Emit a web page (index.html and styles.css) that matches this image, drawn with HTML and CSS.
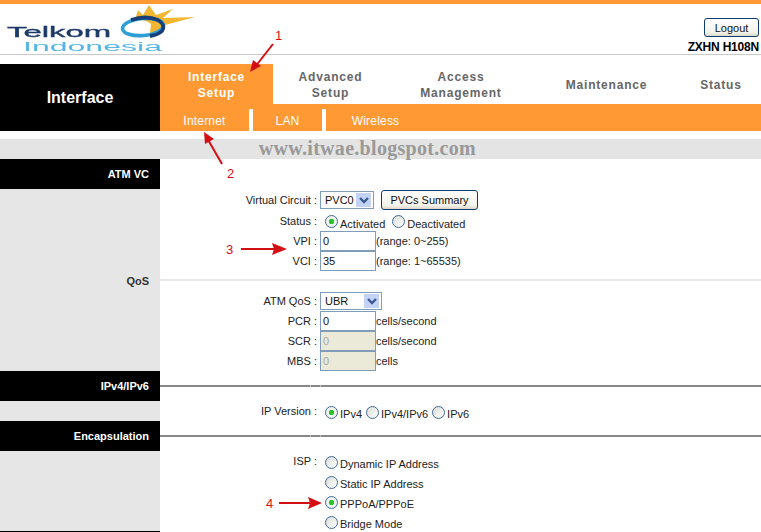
FILE: index.html
```html
<!DOCTYPE html>
<html>
<head>
<meta charset="utf-8">
<title>Interface Setup</title>
<link rel="stylesheet" href="styles.css">
</head>
<body>
<div class="page">
  <header class="top">
    <svg class="logo" width="200" height="50" viewBox="0 4 200 50">
      <path d="M135 20 L138 10 L143 15 L149 5 L156 15 L173 9 L163 18 L195 17 L165 25 L163 30 L150 33 L151 24 Q146 20 140 20 Z" fill="#f2b632"/>
      <ellipse cx="143" cy="27" rx="20.5" ry="8.5" fill="none" stroke="#2d9ed6" stroke-width="3.6" transform="rotate(-5 143 27)"/>
      <path d="M131 20 Q146 15 158 20 Q166 25 162 31 Q158 35 150 36" fill="none" stroke="#173f78" stroke-width="3.8"/>
      <text class="logo-a" x="7" y="37" textLength="104" lengthAdjust="spacingAndGlyphs">Telkom</text>
      <text class="logo-b" x="23" y="51" textLength="139" lengthAdjust="spacingAndGlyphs">Indonesia</text>
    </svg>
    <div class="top-right">
      <button class="btn logout">Logout</button>
      <div class="model">ZXHN H108N</div>
    </div>
  </header>

  <nav class="nav">
    <div class="nav-title">Interface</div>
    <div class="nav-main">
      <div class="tabs">
        <div class="tab tab-active t1">Interface<br>Setup</div>
        <div class="tab t2">Advanced<br>Setup</div>
        <div class="tab t3">Access<br>Management</div>
        <div class="tab t4">Maintenance</div>
        <div class="tab t5">Status</div>
      </div>
      <div class="subtabs">
        <div class="sub s1">Internet</div>
        <div class="sub s2">LAN</div>
        <div class="sub s3">Wireless</div>
      </div>
    </div>
  </nav>

  <div class="band">www.itwae.blogspot.com</div>

  <main class="content">
    <section class="sec">
      <h2 class="side side-black h30">ATM VC</h2>
      <div class="body"></div>
    </section>

    <section class="sec">
      <div class="side side-gray qos-side"><span class="side-label">QoS</span></div>
      <div class="body body-qos">
        <div class="row"><span class="lbl">Virtual Circuit :</span><span class="val"><span class="select s-pvc">PVC0<span class="arrow"><svg width="10" height="7" viewBox="0 0 10 7"><path d="M1 1 L5 5 L9 1" fill="none" stroke="#3a5a94" stroke-width="2.4"/></svg></span></span><button class="btn summary">PVCs Summary</button></span></div>
        <div class="row row-tall"><span class="lbl">Status :</span><span class="val val-radio"><span class="radio on"></span><span class="opt opt-wide">Activated</span><span class="radio"></span><span class="opt">Deactivated</span></span></div>
        <div class="row"><span class="lbl">VPI :</span><span class="val"><span class="input">0</span><span>(range: 0~255)</span></span></div>
        <div class="row"><span class="lbl">VCI :</span><span class="val"><span class="input">35</span><span>(range: 1~65535)</span></span></div>
        <div class="rule-light"></div>
        <div class="row"><span class="lbl">ATM QoS :</span><span class="val"><span class="select s-ubr">UBR<span class="arrow"><svg width="10" height="7" viewBox="0 0 10 7"><path d="M1 1 L5 5 L9 1" fill="none" stroke="#3a5a94" stroke-width="2.4"/></svg></span></span></span></div>
        <div class="row"><span class="lbl">PCR :</span><span class="val"><span class="input">0</span><span>cells/second</span></span></div>
        <div class="row"><span class="lbl">SCR :</span><span class="val"><span class="input off">0</span><span>cells/second</span></span></div>
        <div class="row"><span class="lbl">MBS :</span><span class="val"><span class="input off">0</span><span>cells</span></span></div>
      </div>
    </section>

    <section class="sec">
      <h2 class="side side-black h30">IPv4/IPv6</h2>
      <div class="body rule-body"><div class="rule-dark"></div></div>
    </section>

    <section class="sec">
      <div class="side side-gray"></div>
      <div class="body">
        <div class="row"><span class="lbl">IP Version :</span><span class="val val-radio"><span class="radio on"></span><span class="opt">IPv4</span><span class="radio"></span><span class="opt">IPv4/IPv6</span><span class="radio"></span><span class="opt">IPv6</span></span></div>
      </div>
    </section>

    <section class="sec">
      <h2 class="side side-black h30">Encapsulation</h2>
      <div class="body rule-body"><div class="rule-dark"></div></div>
    </section>

    <section class="sec">
      <div class="side side-gray last"></div>
      <div class="body">
        <div class="row"><span class="lbl">ISP :</span><span class="val val-radio"><span class="radio"></span><span class="opt">Dynamic IP Address</span></span></div>
        <div class="row"><span class="lbl"></span><span class="val val-radio"><span class="radio"></span><span class="opt">Static IP Address</span></span></div>
        <div class="row"><span class="lbl"></span><span class="val val-radio"><span class="radio on"></span><span class="opt">PPPoA/PPPoE</span></span></div>
        <div class="row"><span class="lbl"></span><span class="val val-radio"><span class="radio"></span><span class="opt">Bridge Mode</span></span></div>
      </div>
    </section>
  </main>

  <svg class="notes" width="761" height="532" viewBox="0 0 761 532">
    <g fill="none" stroke="#d40f14" stroke-width="2">
      <path d="M273 44 L255 67"/>
      <path d="M222 164 L207 138"/>
      <path d="M241 249 L280 249"/>
      <path d="M279 503 L316 503"/>
    </g>
    <g fill="#d40f14">
      <path d="M250 72 L253 60 L261 66 Z"/>
      <path d="M204 132 L214 139 L205 144 Z"/>
      <path d="M287 249 L272 243 L274 249 L272 255 Z"/>
      <path d="M322 503 L308 497 L310 503 L308 509 Z"/>
    </g>
    <g class="note-nums">
      <text x="275" y="40">1</text>
      <text x="227" y="178">2</text>
      <text x="226" y="254">3</text>
      <text x="266" y="508">4</text>
    </g>
  </svg>
</div>
</body>
</html>
```
FILE: styles.css
```css
* { box-sizing: border-box; }
html, body { margin: 0; padding: 0; background: #fff; overflow: hidden; }
body { font: 11px "Liberation Sans", Arial, sans-serif; color: #222; }
.page { position: relative; width: 761px; height: 532px; overflow: hidden; }

.top { border-top: 4px solid #ff9933; height: 55px; border-bottom: 1px solid #c8c8c8; display: flex; justify-content: space-between; }
.logo { display: block; filter: blur(0.35px); }
.logo-a { font: 400 14.5px "Liberation Sans", sans-serif; fill: #1c3a66; stroke: #1c3a66; stroke-width: 0.35px; }
.logo-b { font: 400 12.5px "Liberation Sans", sans-serif; fill: #58b6e6; }
.top-right { display: flex; flex-direction: column; align-items: flex-end; padding: 14px 2px 0 0; }
.logout { width: 55px; height: 20px; }
.model { font: 700 12px "Liberation Sans", sans-serif; color: #000; margin-top: 3px; white-space: nowrap; letter-spacing: -0.2px; }

.btn { font: 11px "Liberation Sans", sans-serif; color: #111; background: linear-gradient(#fff, #f3f2ea 80%, #dcd8c8); border: 1px solid #0f3c73; border-radius: 3px; padding: 0; }

.nav { margin-top: 9px; display: flex; height: 67px; }
.nav-title { width: 160px; flex: none; background: #000; color: #fff; font: 700 16px "Liberation Sans", sans-serif; display: flex; align-items: center; justify-content: center; }
.nav-main { flex: 1; min-width: 0; display: flex; flex-direction: column; }
.tabs { height: 40px; display: flex; }
.tab { flex: none; font: 700 12px/16px "Liberation Sans", sans-serif; letter-spacing: 0.8px; color: #666; text-align: center; display: flex; align-items: center; justify-content: center; padding-top: 2px; }
.tab-active { background: #ff9933; color: #fff; }
.t1 { width: 113px; }
.t2 { width: 115px; }
.t3 { width: 146px; }
.t4 { width: 145px; }
.t5 { width: 84px; }
.subtabs { height: 27px; background: #ff9933; display: flex; padding-top: 5px; }
.sub { color: #fff; font: 12px/24px "Liberation Sans", sans-serif; letter-spacing: 0.2px; text-align: center; border-right: 4px solid #fff; height: 22px; }
.s1 { width: 93px; }
.s2 { width: 73px; }
.s3 { width: 99px; border-right: 0; }

.band { margin-top: 8px; height: 20px; background: #e4e4e4; color: #999; font: 700 20px/19px "Liberation Serif", serif; letter-spacing: 0.3px; text-align: right; padding-right: 285px; white-space: nowrap; }

.sec { display: flex; }
.side { width: 160px; flex: none; margin: 0; }
.side-black { background: #000; color: #fff; font: 700 11px/30px "Liberation Sans", sans-serif; text-align: right; padding-right: 11px; }
.h30 { height: 30px; }
.side-gray { background: #e6e6e6; }
.last { border-bottom: 1px solid #000; height: 81px; }
.qos-side { height: 182px; padding-top: 85px; text-align: right; padding-right: 11px; }
.side-label { font: 700 11px/14px "Liberation Sans", sans-serif; color: #333; }
.body { flex: 1; min-width: 0; }
.body-qos { padding-top: 1px; }
.rule-body { padding-top: 14px; }
.rule-dark { height: 2px; background: linear-gradient(90deg, #888 0 150px, #bbb 150px 151px, #888 151px 160px, #bbb 160px 161px, #888 161px); }
.rule-light { height: 2px; background: #e6e6e6; margin: 8px 0 10px; }

.row { display: flex; height: 20px; align-items: center; }
.row-tall { height: 21px; }
.lbl { width: 157px; flex: none; text-align: right; white-space: nowrap; }
.val { display: flex; align-items: center; margin-left: 3px; white-space: nowrap; }
.val-radio { padding-left: 4px; }
.select { display: flex; align-items: center; justify-content: space-between; height: 18px; border: 1px solid #7f9db9; background: #fff; padding: 0 2px 0 4px; font-size: 11px; color: #111; }
.s-pvc { width: 54px; }
.s-ubr { width: 62px; }
.arrow { width: 15px; height: 14px; background: #c3d3f5; display: flex; align-items: center; justify-content: center; }
.summary { width: 97px; height: 20px; margin-left: 7px; }
.input { display: block; width: 56px; height: 20px; border: 1px solid #7f9db9; background: #fff; font-size: 11px; line-height: 18px; padding-left: 2px; color: #111; }
.off { background: #ebe9d8; color: #aaa; }
.radio { width: 13px; height: 13px; border-radius: 50%; border: 1px solid #3f6a9a; background: linear-gradient(135deg, #dcdcd4, #fff); flex: none; margin-left: 1px; margin-right: 2px; position: relative; top: 1px; }
.radio.on { background: radial-gradient(circle, #2bc22b 0 2.5px, #f2f2ee 3px); }
.opt { position: relative; top: 3px; margin-right: 3px; }
.opt-wide { margin-right: 6px; }

.notes { position: absolute; left: 0; top: 0; pointer-events: none; }
.note-nums { font: 400 13px "Liberation Sans", sans-serif; fill: #d40f14; }
```
